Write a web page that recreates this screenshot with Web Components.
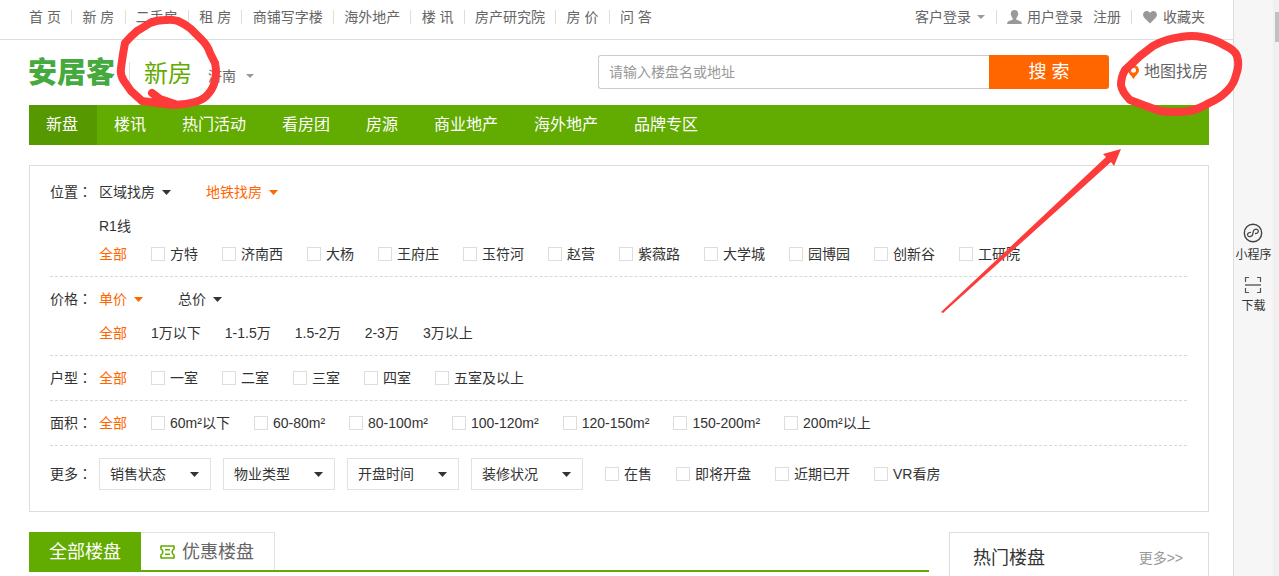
<!DOCTYPE html>
<html lang="zh-CN">
<head>
<meta charset="utf-8">
<title>安居客 新房 济南</title>
<style>
html,body{margin:0;height:100%;overflow:hidden;background:#fff}
body{font-family:"Liberation Sans","Noto Sans CJK SC",sans-serif;font-size:14px;line-height:24px;color:#333;
--green:#62ab00;--dark-green:#559800;--orange:#ff6600;--line:#ddd;--grey:#666}
</style>
</head>
<body>
<page-shell>
  <top-bar></top-bar>
  <site-header></site-header>
  <main-nav></main-nav>
  <filter-panel>
    <filter-row label="位置">
      <filter-line class="modes"><drop-link>区域找房</drop-link><drop-link active>地铁找房</drop-link></filter-line>
      <filter-line tight><plain-link>R1线</plain-link></filter-line>
      <filter-line><plain-link active>全部</plain-link><check-item>方特</check-item><check-item>济南西</check-item><check-item>大杨</check-item><check-item>王府庄</check-item><check-item>玉符河</check-item><check-item>赵营</check-item><check-item>紫薇路</check-item><check-item>大学城</check-item><check-item>园博园</check-item><check-item>创新谷</check-item><check-item>工研院</check-item></filter-line>
    </filter-row>
    <filter-row label="价格">
      <filter-line class="modes"><drop-link active>单价</drop-link><drop-link>总价</drop-link></filter-line>
      <filter-line><plain-link active>全部</plain-link><plain-link>1万以下</plain-link><plain-link>1-1.5万</plain-link><plain-link>1.5-2万</plain-link><plain-link>2-3万</plain-link><plain-link>3万以上</plain-link></filter-line>
    </filter-row>
    <filter-row label="户型">
      <filter-line><plain-link active>全部</plain-link><check-item>一室</check-item><check-item>二室</check-item><check-item>三室</check-item><check-item>四室</check-item><check-item>五室及以上</check-item></filter-line>
    </filter-row>
    <filter-row label="面积">
      <filter-line><plain-link active>全部</plain-link><check-item>60m²以下</check-item><check-item>60-80m²</check-item><check-item>80-100m²</check-item><check-item>100-120m²</check-item><check-item>120-150m²</check-item><check-item>150-200m²</check-item><check-item>200m²以上</check-item></filter-line>
    </filter-row>
    <filter-row label="更多" last>
      <filter-line><select-group><drop-select label="销售状态"></drop-select><drop-select label="物业类型"></drop-select><drop-select label="开盘时间"></drop-select><drop-select label="装修状况"></drop-select></select-group><check-item>在售</check-item><check-item>即将开盘</check-item><check-item>近期已开</check-item><check-item>VR看房</check-item></filter-line>
    </filter-row>
  </filter-panel>
  <list-area></list-area>
  <side-rail slot="rail"></side-rail>
  <pen-marks slot="marks"></pen-marks>
</page-shell>

<script>
const define = (name, html) => customElements.define(name, class extends HTMLElement {
  constructor() {
    super();
    const t = document.createElement('template');
    t.innerHTML = typeof html === 'function' ? html(this) : html;
    this.attachShadow({mode: 'open'}).append(t.content.cloneNode(true));
  }
});

define('page-shell', `
<style>
:host{display:flex;height:100%;position:relative}
main{flex:1;min-width:0;overflow:hidden}
</style>
<main><slot></slot></main><slot name="rail"></slot><slot name="marks"></slot>`);

define('top-bar', `
<style>
:host{display:flex;justify-content:space-between;align-items:center;height:34px;padding:0 28px 5px 29px;border-bottom:1px solid var(--line)}
a{color:var(--grey);text-decoration:none;white-space:nowrap}
nav{display:flex;justify-content:space-between;width:623px}
.user{display:flex;align-items:center}
i{width:1px;height:14px;background:var(--line);align-self:center}
svg{display:block;flex:none}
.user a{display:flex;align-items:center}
</style>
<nav><a href="#">首 页</a><i></i><a href="#">新 房</a><i></i><a href="#">二手房</a><i></i><a href="#">租 房</a><i></i><a href="#">商铺写字楼</a><i></i><a href="#">海外地产</a><i></i><a href="#">楼 讯</a><i></i><a href="#">房产研究院</a><i></i><a href="#">房 价</a><i></i><a href="#">问 答</a></nav>
<div class="user">
<a href="#" style="gap:6px">客户登录<svg width="8" height="4"><path d="M0 0h8L4 4z" fill="#999"/></svg></a>
<i style="margin:0 10px 0 11px"></i>
<a href="#" style="gap:5px"><svg width="15" height="14" viewBox="0 0 15 14"><path d="M7.500 0C10 0 11.200 1.500 11.100 3.700 11.500 4 11.300 5.300 10.700 5.600 10.400 7 9.700 7.800 9.300 8.200V9.400C9.600 10.300 14.500 10.400 14.800 13V14H.2V13C.5 10.400 5.400 10.300 5.700 9.400V8.200C5.300 7.800 4.600 7 4.300 5.600 3.700 5.300 3.500 4 3.900 3.700 3.800 1.500 5 0 7.500 0z" fill="#999"/></svg>用户登录</a>
<a href="#" style="margin-left:10px">注册</a>
<i style="margin:0 11px 0 10px"></i>
<a href="#" style="gap:6px"><svg width="14" height="13" viewBox="0 0 14 13"><path d="M7 12.500L1.300 6.800C-.4 5-.3 2.300 1.200 1 2.800-.4 5.300-.2 7 2 8.700-.2 11.200-.4 12.800 1 14.300 2.300 14.400 5 12.700 6.800z" fill="#999"/></svg>收藏夹</a>
</div>`);

define('site-header', `
<style>
:host{display:flex;align-items:center;height:65px;padding:0 25px 0 28px}
a{color:var(--grey);text-decoration:none;white-space:nowrap}
.logo{font-size:29px;line-height:32px;font-weight:900;color:#45a93e}
i{width:1px;height:28px;background:var(--line);margin:6px 14px 0}
.section{font-size:24px;line-height:32px;color:var(--green);padding-top:2px}
.city{display:flex;align-items:center;gap:10px;margin:6px auto 0 16px}
form{display:flex;height:34px;width:511px;margin:0 19px 2px 0}
input{flex:1;min-width:0;box-sizing:border-box;border:1px solid #ccc;border-right:0;border-radius:3px 0 0 3px;padding:0 10px;font:inherit;outline:0}
input::placeholder{color:#999;opacity:1}
button{width:120px;border:0;border-radius:0 3px 3px 0;background:var(--orange);color:#fff;font:inherit;font-size:18px;padding:0}
.map{display:flex;align-items:center;gap:5px;font-size:16px;padding-bottom:2px}
svg{display:block;flex:none}
</style>
<a class="logo" href="#">安居客</a><i></i><a class="section" href="#">新房</a>
<a class="city" href="#">济南<svg width="8" height="4"><path d="M0 0h8L4 4z" fill="#999"/></svg></a>
<form><input type="text" placeholder="请输入楼盘名或地址" aria-label="楼盘搜索"><button type="button">搜 索</button></form>
<a class="map" href="#"><svg width="11" height="14" viewBox="0 0 11 14"><path fill-rule="evenodd" fill="#f60" d="M5.500 0C8.600 0 11 2.300 11 5.300 11 8 8.500 9.500 5.500 14 2.500 9.500 0 8 0 5.300 0 2.300 2.400 0 5.500 0zM5.500 2.800A2.500 2.500 0 1 0 5.500 7.800 2.500 2.500 0 1 0 5.500 2.800z"/></svg>地图找房</a>`);

define('main-nav', `
<style>
:host{display:flex;height:40px;margin:0 24px 0 29px;background:var(--green)}
a{color:#fff;text-decoration:none;font-size:16px;line-height:40px;padding:0 19px 0 17px;white-space:nowrap}
.on{background:var(--dark-green)}
</style>
<a class="on" href="#">新盘</a><a href="#">楼讯</a><a href="#">热门活动</a><a href="#">看房团</a><a href="#">房源</a><a href="#">商业地产</a><a href="#">海外地产</a><a href="#">品牌专区</a>`);

define('filter-panel', `
<style>:host{display:block;margin:20px 24px 20px 29px;padding:4px 21px 9px 20px;border:1px solid var(--line)}</style><slot></slot>`);

define('filter-row', el => `
<style>
:host{display:flex;padding:10px 0;border-bottom:1px dashed #d8d8d8}
:host([last]){padding:12px 0;border:0;align-items:center}
span{flex:none;width:49px;white-space:nowrap}
b{font-weight:400;font-family:"Noto Sans CJK TC",sans-serif;line-height:20px}
div{flex:1;display:flex;flex-direction:column;gap:10px}
</style><span>${el.getAttribute('label')}<b lang="zh-TW">：</b></span><div><slot></slot></div>`);

define('filter-line', `
<style>
:host{display:flex;gap:24px;align-items:center}
:host(.modes){gap:35px}
:host([tight]){margin-bottom:-6px}
</style><slot></slot>`);

define('plain-link', `
<style>:host{display:block;white-space:nowrap}a{color:inherit;text-decoration:none}:host([active]){color:var(--orange)}</style>
<a href="#"><slot></slot></a>`);

define('drop-link', `
<style>:host{display:block;white-space:nowrap}a{display:flex;align-items:center;gap:7px;color:inherit;text-decoration:none}:host([active]){color:var(--orange)}</style>
<a href="#"><slot></slot><svg width="9" height="5"><path d="M0 0h9L4.500 5z" fill="currentColor"/></svg></a>`);

define('check-item', `
<style>
:host{display:block;white-space:nowrap}
label{display:flex;align-items:center;gap:5px}
input{appearance:none;box-sizing:border-box;width:14px;height:14px;margin:0;border:1px solid var(--line);background:#fff}
</style><label><input type="checkbox"><slot></slot></label>`);

define('select-group', `<style>:host{display:flex;gap:12px;margin-right:-2px}</style><slot></slot>`);

define('drop-select', el => `
<style>
:host{display:grid;align-items:center;width:112px;height:32px}
select{grid-area:1/1;appearance:none;box-sizing:border-box;width:100%;height:100%;border:1px solid #e2e2e2;border-radius:0;background:#fff;color:inherit;font:inherit;padding:0 10px;margin:0}
svg{grid-area:1/1;justify-self:end;margin-right:12px;pointer-events:none}
</style><select aria-label="${el.getAttribute('label')}"><option>${el.getAttribute('label')}</option></select><svg width="9" height="5"><path d="M0 0h9L4.500 5z" fill="#333"/></svg>`);

define('list-area', `
<style>
:host{display:flex;gap:20px;margin:0 24px 0 29px;align-items:flex-start}
a{text-decoration:none;white-space:nowrap}
nav{flex:1;display:flex;border-bottom:2px solid var(--green);font-size:18px;line-height:36px}
nav a{display:flex;align-items:center;gap:7px;padding:2px 20px 0;border-top:0 solid #e2e2e2;color:var(--grey)}
nav .on{background:var(--green);color:#fff}
nav .sale{padding:1px 20px 0 19px;border-top-width:1px;border-right:1px solid #e2e2e2}
section{box-sizing:border-box;width:260px;min-height:320px;border:1px solid var(--line);padding:13px 25px 0 23px}
header{display:flex;justify-content:space-between;align-items:center}
h2{margin:0;font-size:18px;font-weight:400;line-height:24px}
header a{color:#999}
</style>
<nav><a class="on" href="#">全部楼盘</a><a class="sale" href="#"><svg width="15" height="14" viewBox="0 0 15 14" fill="none" stroke="#62ab00" stroke-width="1.600" stroke-linejoin="round"><path d="M1 1H14V4C11.600 5 11.600 9 14 10V13H1V10C3.400 9 3.400 5 1 4z"/><path d="M5 4.800h5M5 9.200h5"/></svg>优惠楼盘</a></nav>
<section><header><h2>热门楼盘</h2><a href="#">更多&gt;&gt;</a></header></section>`);

define('side-rail', `
<style>
:host{display:flex;flex:none;width:46px;height:100%;box-sizing:border-box;border-left:1px solid var(--line);background:#f6f6f6}
nav{flex:1;display:flex;flex-direction:column;align-items:center;gap:13px;padding-top:223px}
a{display:flex;flex-direction:column;align-items:center;gap:4px;color:#333;text-decoration:none;font-size:12px;line-height:16px;white-space:nowrap}
.track{width:6px;background:#f0f0f0;padding-top:12px}
.thumb{height:30px;margin-left:2px;background:#c1c1c1}
</style>
<nav>
<a href="#"><svg width="20" height="20" viewBox="0 0 20 20" fill="none" stroke="#444"><circle cx="10" cy="10" r="8.700" stroke-width="1.400"/><path stroke-width="1.300" stroke-linecap="round" d="M7.500 9.300C4.800 9.300 3.800 11.500 5 12.900 6.400 14.400 9.300 13.500 9.700 11.300L10.300 8.300C10.700 6.300 13.400 5.500 14.800 6.900 16 8.300 15.100 10.500 12.500 10.500"/></svg>小程序</a>
<a href="#"><svg width="18" height="18" viewBox="0 0 18 18" fill="none"><path stroke="#555" stroke-width="1.200" d="M1.500 6V1.500H5M13 1.500H16.500V6M1.500 12V16.500H5M13 16.500H16.500V12"/><path stroke="#888" stroke-width="2" d="M1 9H17"/></svg>下载</a>
</nav>
<div class="track"><div class="thumb"></div></div>`);

define('pen-marks', `
<style>:host{display:block;position:absolute;top:0;left:0;pointer-events:none}svg{display:block}</style>
<svg width="1260" height="330" viewBox="0 0 1260 330" fill="none" stroke="#fc3b3a" stroke-linecap="round" stroke-linejoin="round">
<path stroke-width="8" d="M165 20Q172 19 178 21 185 24 191 29L202 40Q208 46 210 53L215 63Q217 72 215 80 214 87 209 93 204 100 195 102 184 105 173 105L157 103 142 101 131 91 124 81Q120 75 121 68L123 54 125 43Q130 37 137 31 144 27 150 23 157 20 165 20M152 93L160 99 175 104"/>
<path stroke-width="8" d="M1181 37Q1192 35 1202 37 1214 39 1224 45 1235 50 1237 56 1240 65 1236 75 1234 84 1227 91 1219 99 1209 103 1199 109 1190 111 1174 113 1160 111L1146 106 1130 100Q1122 92 1121 85 1121 77 1125 70L1140 56 1153 46Q1165 39 1181 37"/>
<path stroke="none" fill="#fc3b3a" d="M941 312L1106 157 1103 154 1121 149 1114 166 1111 162 943 313z"/>
</svg>`);
</script>
</body>
</html>
